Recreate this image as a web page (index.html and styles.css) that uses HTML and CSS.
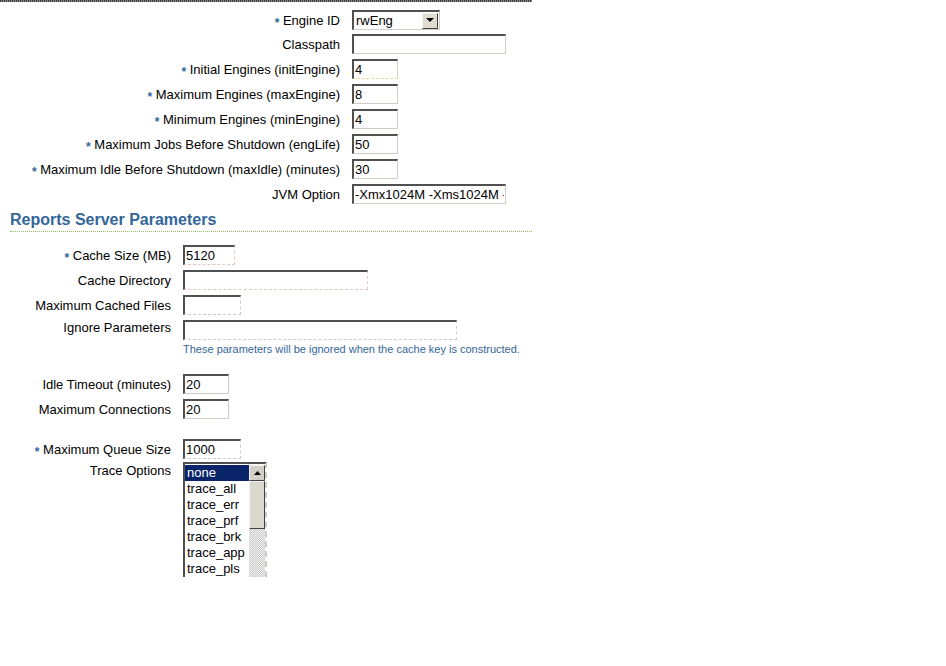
FILE: index.html
```html
<!DOCTYPE html>
<html>
<head>
<meta charset="utf-8">
<title>Reports Server Parameters</title>
<link rel="stylesheet" href="styles.css">
</head>
<body>
<div class="topline"></div>

<div class="form engine-form">
  <div class="row row-first">
    <div class="label"><span class="req">*</span> Engine ID</div>
    <div class="field">
      <div class="select">
        <span class="select-value">rwEng</span>
        <span class="select-btn"><svg width="8" height="5" viewBox="0 0 8 5"><path d="M0 0H8L4 4Z" fill="#000"/></svg></span>
      </div>
    </div>
  </div>
  <div class="row">
    <div class="label">Classpath</div>
    <div class="field"><input class="input w-long" type="text" value=""></div>
  </div>
  <div class="row">
    <div class="label"><span class="req">*</span> Initial Engines (initEngine)</div>
    <div class="field"><input class="input w-num yellow" type="text" value="4"></div>
  </div>
  <div class="row">
    <div class="label"><span class="req">*</span> Maximum Engines (maxEngine)</div>
    <div class="field"><input class="input w-num" type="text" value="8"></div>
  </div>
  <div class="row">
    <div class="label"><span class="req">*</span> Minimum Engines (minEngine)</div>
    <div class="field"><input class="input w-num" type="text" value="4"></div>
  </div>
  <div class="row">
    <div class="label"><span class="req">*</span> Maximum Jobs Before Shutdown (engLife)</div>
    <div class="field"><input class="input w-num" type="text" value="50"></div>
  </div>
  <div class="row">
    <div class="label"><span class="req">*</span> Maximum Idle Before Shutdown (maxIdle) (minutes)</div>
    <div class="field"><input class="input w-num" type="text" value="30"></div>
  </div>
  <div class="row">
    <div class="label">JVM Option</div>
    <div class="field"><input class="input w-long" type="text" value="-Xmx1024M -Xms1024M -Xss512K"></div>
  </div>
</div>

<h2 class="section-title">Reports Server Parameters</h2>

<div class="form server-form">
  <div class="row">
    <div class="label"><span class="req">*</span> Cache Size (MB)</div>
    <div class="field"><input class="input w-52 pink" type="text" value="5120"></div>
  </div>
  <div class="row">
    <div class="label">Cache Directory</div>
    <div class="field"><input class="input w-185 pink" type="text" value=""></div>
  </div>
  <div class="row">
    <div class="label">Maximum Cached Files</div>
    <div class="field"><input class="input w-58" type="text" value=""></div>
  </div>
  <div class="row row-top">
    <div class="label label-top">Ignore Parameters</div>
    <div class="field">
      <input class="input w-274" type="text" value="">
      <div class="help">These parameters will be ignored when the cache key is constructed.</div>
    </div>
  </div>
  <div class="row row-after-help">
    <div class="label">Idle Timeout (minutes)</div>
    <div class="field"><input class="input w-46" type="text" value="20"></div>
  </div>
  <div class="row">
    <div class="label">Maximum Connections</div>
    <div class="field"><input class="input w-46" type="text" value="20"></div>
  </div>
  <div class="row row-spaced">
    <div class="label"><span class="req">*</span> Maximum Queue Size</div>
    <div class="field"><input class="input w-58" type="text" value="1000"></div>
  </div>
  <div class="row row-top row-trace">
    <div class="label label-trace">Trace Options</div>
    <div class="field">
      <div class="listbox">
        <div class="list-items">
          <div class="list-item selected">none</div>
          <div class="list-item">trace_all</div>
          <div class="list-item">trace_err</div>
          <div class="list-item">trace_prf</div>
          <div class="list-item">trace_brk</div>
          <div class="list-item">trace_app</div>
          <div class="list-item">trace_pls</div>
        </div>
        <div class="scrollbar">
          <div class="sb-btn"><svg width="7" height="4" viewBox="0 0 7 4"><path d="M3.5 0L7 4H0Z" fill="#000"/></svg></div>
          <div class="sb-thumb"></div>
          <div class="sb-track"></div>
        </div>
      </div>
    </div>
  </div>
</div>
</body>
</html>
```

FILE: styles.css
```css
html, body {
  margin: 0;
  padding: 0;
  background: #ffffff;
}

body {
  font-family: "Liberation Sans", Arial, sans-serif;
  font-size: 13px;
  color: #000;
}

.topline {
  width: 532px;
  height: 2px;
  background: repeating-linear-gradient(90deg, #3a3a3a 0 1px, #8a8a8a 1px 2px);
}

.row {
  display: flex;
  align-items: center;
  margin-top: 5px;
}

.engine-form .row-first {
  margin-top: 8px;
}

.engine-form .row-first + .row {
  margin-top: 4px;
}

.engine-form .label {
  width: 340px;
}

.server-form .label {
  width: 171px;
}

.label {
  flex: none;
  text-align: right;
  padding-right: 12px;
  line-height: 20px;
  position: relative;
  top: 1px;
  white-space: nowrap;
}

.row-top {
  align-items: flex-start;
}

.label-top {
  line-height: 14px;
}

.req {
  color: #336699;
  font-size: 12px;
  font-weight: bold;
  position: relative;
  top: 2px;
}

.input {
  box-sizing: border-box;
  height: 20px;
  margin: 0;
  padding: 0 1px;
  font-family: "Liberation Sans", Arial, sans-serif;
  font-size: 13px;
  color: #000;
  background: #fff;
  border-style: solid;
  border-width: 2px 1px 1px 2px;
  border-top-color: #505050;
  border-left-color: #505050;
  border-right-color: #d0ccc4;
  border-bottom-color: #d0ccc4;
  outline: none;
  display: block;
}

.input.yellow {
  border-bottom-style: dashed;
  border-bottom-color: #e4dca0;
  border-right-color: #d6d2c6;
}

.input.pink {
  border-right-style: dashed;
  border-bottom-style: dashed;
  border-right-color: #e2c8b8;
  border-bottom-color: #e2c8b8;
}

.w-num { width: 46px; }
.w-long { width: 154px; }
.w-46 { width: 46px; }
.w-52 { width: 52px; }
.w-58 { width: 58px; border-right-style: dashed; border-bottom-style: dashed; }
.w-185 { width: 185px; }
.w-274 { width: 274px; border-right-style: dashed; border-bottom-style: dashed; }

.select {
  box-sizing: border-box;
  width: 88px;
  height: 20px;
  display: flex;
  align-items: center;
  border-style: solid;
  border-width: 2px 1px 1px 2px;
  border-color: #505050 #d0ccc4 #d0ccc4 #505050;
  background: #fff;
}

.select-value {
  flex: 1;
  padding-left: 2px;
  font-size: 13px;
  line-height: 16px;
}

.select-btn {
  box-sizing: border-box;
  width: 16px;
  height: 16px;
  margin-right: 1px;
  display: flex;
  align-items: center;
  justify-content: center;
  border-style: solid;
  border-width: 1px;
  border-color: #f4f2ec #404040 #404040 #f4f2ec;
  background: repeating-conic-gradient(#d4d0c8 0 25%, #ece8dc 0 50%) 0 0 / 2px 2px;
}

.section-title {
  margin: 7px 0 0 10px;
  width: 522px;
  padding: 0 0 2px 0;
  font-size: 16px;
  line-height: 18px;
  font-weight: bold;
  color: #336699;
  border-bottom: 1px dotted #99bb66;
}

.server-form .row:first-child {
  margin-top: 13px;
}

.help {
  margin-top: 3px;
  font-size: 11px;
  line-height: 13px;
  color: #336699;
  white-space: nowrap;
}

.row-after-help {
  margin-top: 18px;
}

.row-spaced {
  margin-top: 20px;
}

.row-trace {
  margin-top: 3px;
}

.label-trace {
  line-height: 16px;
}

.listbox {
  box-sizing: border-box;
  width: 84px;
  height: 115px;
  display: flex;
  overflow: hidden;
  border-style: solid;
  border-width: 2px 2px 0 2px;
  border-top-color: #505050;
  border-left-color: #505050;
  border-right-color: #d0ccc4;
  border-right-style: dashed;
  background: #fff;
}

.list-items {
  flex: 1;
  font-size: 13px;
  line-height: 16px;
  padding-top: 1px;
}

.list-item {
  padding-left: 2px;
  height: 16px;
  white-space: nowrap;
}

.list-item.selected {
  background: #0a246a;
  color: #fff;
}

.scrollbar {
  width: 16px;
  display: flex;
  flex-direction: column;
  padding-top: 1px;
}

.sb-btn {
  box-sizing: border-box;
  height: 16px;
  display: flex;
  align-items: center;
  justify-content: center;
  border-style: solid;
  border-width: 1px;
  border-color: #f4f2ec #404040 #404040 #f4f2ec;
  background: #d4d0c8;
}

.sb-thumb {
  box-sizing: border-box;
  height: 48px;
  border-style: solid;
  border-width: 1px;
  border-color: #f4f2ec #404040 #404040 #f4f2ec;
  background: repeating-conic-gradient(#d4d0c8 0 25%, #e4e0d4 0 50%) 0 0 / 2px 2px;
}

.sb-track {
  flex: 1;
  background: repeating-conic-gradient(#c8c8c8 0 25%, #f4f4f4 0 50%) 0 0 / 2px 2px;
}
```
